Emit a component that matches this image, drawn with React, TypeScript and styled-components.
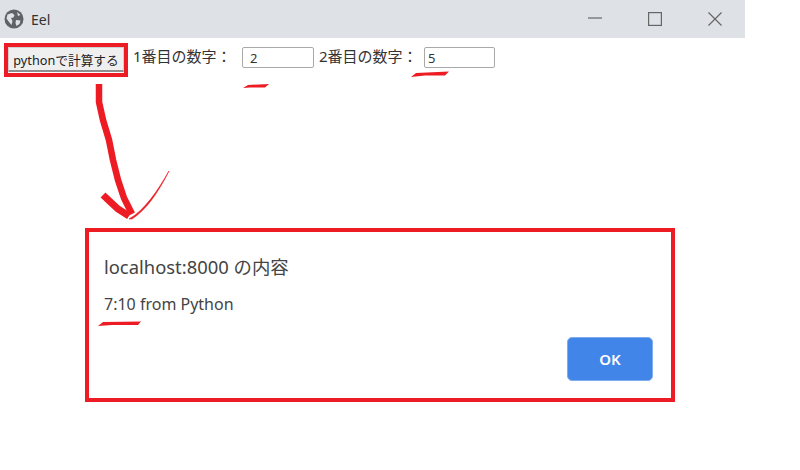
import styled, { createGlobalStyle } from 'styled-components';

const GlobalStyle = createGlobalStyle`
  html, body {
    margin: 0;
    padding: 0;
    background: #fff;
  }
  body {
    font-family: "Noto Sans", "Noto Sans CJK JP", sans-serif;
    color: #333;
  }
`;

const App = () => {
  return (
    <Page>
      <GlobalStyle />
      <Window>
        <TitleBar>
          <TitleLeft>
            <svg width="20" height="20" viewBox="0 0 20 20">
              <circle cx="10" cy="10" r="9.5" fill="#5f6368" />
              <path
                d="M3.5 5.5 L8 4 L10.5 6 L9.5 8.5 L7 9 L8.5 12 L7.5 16 L5 13 L2.5 9.5 Z M12 11 L16.5 11.5 L15.5 15 L12.5 17 L11.5 14 Z M13 3 L16.5 6 L14 7 Z"
                fill="#dee1e6"
              />
            </svg>
            <Title>Eel</Title>
          </TitleLeft>
          <WindowButtons>
            <WindowButton>
              <svg width="14" height="14" viewBox="0 0 14 14">
                <path d="M0 6h14" stroke="#666" strokeWidth="1.2" />
              </svg>
            </WindowButton>
            <WindowButton>
              <svg width="14" height="14" viewBox="0 0 14 14">
                <rect x="0.6" y="0.6" width="12.8" height="12.8" fill="none" stroke="#666" strokeWidth="1.2" />
              </svg>
            </WindowButton>
            <WindowButton>
              <svg width="14" height="14" viewBox="0 0 14 14">
                <path d="M0.5 0.5 L13.5 13.5 M13.5 0.5 L0.5 13.5" stroke="#666" strokeWidth="1.2" />
              </svg>
            </WindowButton>
          </WindowButtons>
        </TitleBar>
        <Toolbar>
          <ButtonFrame>
            <CalcButton>pythonで計算する</CalcButton>
          </ButtonFrame>
          <FirstLabel>1番目の数字：</FirstLabel>
          <NumberInput $inset={7} $width={72} defaultValue="2" />
          <SecondLabel>2番目の数字：</SecondLabel>
          <NumberInput $inset={3} $width={71} defaultValue="5" />
        </Toolbar>
      </Window>

      <Dialog>
        <DialogTitle>localhost:8000 の内容</DialogTitle>
        <DialogMessage>7:10 from Python</DialogMessage>
        <DialogFooter>
          <OkButton>OK</OkButton>
        </DialogFooter>
      </Dialog>

      {/* red pen marks drawn over the screenshot */}
      <Marks width="800" height="470" viewBox="0 0 800 470">
        <path d="M243 88 L248 85 L269 84 L265 87.5 L250 87.5 Z" fill="#ed1c24" />
        <path d="M411 77 L416 73 L449 71.5 L445 75.5 L425 75.5 Z" fill="#ed1c24" />
        <path d="M98 326 L103 322 L141 321.5 L138 325 L112 325 Z" fill="#ed1c24" />
        <path
          d="M99 84 L99 102 L103 120 L109 140 L113 160 L118 180 L124 198 L132 214"
          fill="none"
          stroke="#ed1c24"
          strokeWidth="6.5"
          strokeLinejoin="round"
        />
        <path d="M103 195 L118 209 L129 216" fill="none" stroke="#ed1c24" strokeWidth="7" />
        <path d="M129 219 C145 210 158 190 169 171 C158 193 146 210 132 219 Z" fill="#ed1c24" stroke="#ed1c24" strokeWidth="0.6" />
      </Marks>
    </Page>
  );
};

export default App;

const Page = styled.div`
  position: relative;
  width: 800px;
  height: 470px;
  overflow: hidden;
  background: #fff;
`;

const Window = styled.div`
  width: 745px;
`;

const TitleBar = styled.div`
  display: flex;
  align-items: center;
  justify-content: space-between;
  height: 38px;
  background: #dee1e6;
`;

const TitleLeft = styled.div`
  display: flex;
  align-items: center;
  gap: 7px;
  padding-left: 4px;
`;

const Title = styled.span`
  font-size: 14px;
  color: #333;
`;

const WindowButtons = styled.div`
  display: flex;
`;

const WindowButton = styled.div`
  display: flex;
  align-items: center;
  justify-content: center;
  width: 60px;
  height: 38px;
`;

const Toolbar = styled.div`
  display: flex;
  align-items: flex-start;
  padding: 5px 0 0 4px;
`;

const ButtonFrame = styled.div`
  box-sizing: border-box;
  width: 124px;
  height: 34px;
  border: 4px solid #ed1c24;
`;

const CalcButton = styled.button`
  box-sizing: border-box;
  display: block;
  width: 116px;
  height: 25px;
  padding: 0;
  background: #efefef;
  border: 1px solid #d0d0d0;
  border-bottom: 2px solid #8f8f8f;
  border-radius: 1px;
  font-family: "Noto Sans", "Noto Sans CJK JP", sans-serif;
  font-size: 12.7px;
  color: #222;
`;

const Label = styled.span`
  font-size: 15px;
  line-height: 20px;
  color: #333;
  white-space: nowrap;
`;

const FirstLabel = styled(Label)`
  width: 109px;
  margin: 3px 0 0 5px;
`;

const SecondLabel = styled(Label)`
  width: 105px;
  margin: 3px 0 0 5px;
`;

const NumberInput = styled.input<{ $inset: number; $width: number }>`
  box-sizing: border-box;
  width: ${p => p.$width}px;
  height: 21px;
  margin-top: 4px;
  padding: 0 4px 0 ${p => p.$inset}px;
  background: #fff;
  border: 1px solid #a9a9a9;
  border-radius: 2px;
  font-family: "Noto Sans", sans-serif;
  font-size: 13px;
  color: #333;
  outline: none;
`;

const Dialog = styled.div`
  box-sizing: border-box;
  width: 590px;
  height: 174px;
  margin: 151px 0 0 85px;
  padding: 22px 18px 0 15px;
  border: 4px solid #ed1c24;
  background: #fff;
`;

const DialogTitle = styled.div`
  font-size: 18.4px;
  line-height: 26px;
  color: #444;
`;

const DialogMessage = styled.div`
  margin-top: 13px;
  font-size: 16px;
  line-height: 22px;
  color: #444;
`;

const DialogFooter = styled.div`
  display: flex;
  justify-content: flex-end;
  margin-top: 22px;
`;

const OkButton = styled.button`
  width: 86px;
  height: 44px;
  padding: 0;
  background: #4285e8;
  border: 1px solid #7fabf0;
  border-radius: 5px;
  font-family: "Noto Sans", sans-serif;
  font-size: 15px;
  font-weight: 600;
  color: #fff;
`;

const Marks = styled.svg`
  position: absolute;
  top: 0;
  left: 0;
  pointer-events: none;
`;
